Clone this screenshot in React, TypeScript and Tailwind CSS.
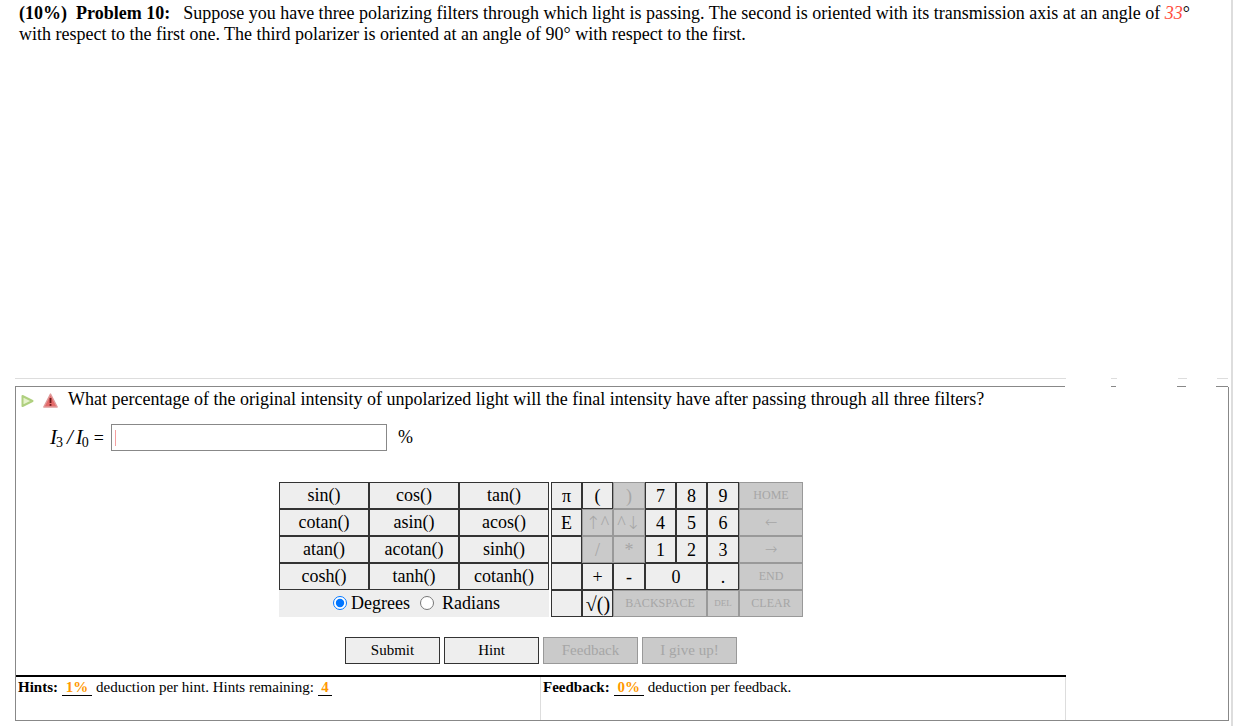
import React from 'react';

const functionKeys = [
  'sin()', 'cos()', 'tan()',
  'cotan()', 'asin()', 'acos()',
  'atan()', 'acotan()', 'sinh()',
  'cosh()', 'tanh()', 'cotanh()',
];

function Arrow({ c, tall }: { c: string; tall?: boolean }) {
  return <span className={`font-['DejaVu_Sans',sans-serif] font-extralight ${tall ? 'text-[18px]' : 'text-[15px]'}`}>{c}</span>;
}

type PadKey = { id: string; label?: React.ReactNode; span?: string; off?: boolean; small?: boolean; extra?: string };

const padKeys: PadKey[] = [
  { id: 'pi', label: 'π' }, { id: 'open', label: '(' }, { id: 'close', label: ')', off: true }, { id: '7', label: '7' }, { id: '8', label: '8' }, { id: '9', label: '9' }, { id: 'home', label: 'HOME', off: true, small: true },
  { id: 'e', label: 'E' }, { id: 'up', label: <><Arrow c="↑" tall />^</>, off: true }, { id: 'down', label: <>^<Arrow c="↓" tall /></>, off: true }, { id: '4', label: '4' }, { id: '5', label: '5' }, { id: '6', label: '6' }, { id: 'left', label: <Arrow c="←" />, off: true },
  { id: 'b1' }, { id: 'div', label: '/', off: true }, { id: 'mul', label: '*', off: true }, { id: '1', label: '1' }, { id: '2', label: '2' }, { id: '3', label: '3' }, { id: 'right', label: <Arrow c="→" />, off: true },
  { id: 'b2' }, { id: 'plus', label: '+' }, { id: 'minus', label: '-' }, { id: '0', label: '0', span: 'col-span-2' }, { id: 'dot', label: '.' }, { id: 'end', label: 'END', off: true, small: true },
  { id: 'b3' }, { id: 'sqrt', label: '√()', extra: 'pl-[1px] text-[20px]' }, { id: 'back', label: 'BACKSPACE', span: 'col-span-3', off: true, small: true }, { id: 'del', label: 'DEL', off: true, small: true, extra: 'text-[9px]' }, { id: 'clear', label: 'CLEAR', off: true, small: true },
];

function PadCell({ k }: { k: PadKey }) {
  const tone = k.off
    ? 'bg-[#cacaca] border-[#999] text-[#a6a6a6]'
    : 'bg-[#eee] border-[#333] text-black';
  const size = k.extra ? k.extra : k.small ? 'pb-[2px] text-[12px]' : 'text-[18px]';
  return (
    <div className={`flex items-center justify-center border overflow-hidden whitespace-nowrap leading-none ${tone} ${size} ${k.span ?? ''}`}>
      {k.label}
    </div>
  );
}

function ActionButton({ label, off }: { label: string; off?: boolean }) {
  return (
    <div
      className={`flex h-[27px] w-[95px] items-center justify-center border text-[15px] ${
        off ? 'bg-[#cacaca] border-[#999] text-[#a6a6a6]' : 'bg-[#eee] border-[#333] text-black'
      }`}
    >
      {label}
    </div>
  );
}

function Deduction({ value, width }: { value: string; width: string }) {
  return (
    <span className={`mx-[4px] inline-block ${width} border-b border-black text-center font-bold leading-[16px] text-[#ff9900]`}>
      {value}
    </span>
  );
}

export default function App() {
  return (
    <div className="h-[726px] w-[1236px] overflow-hidden bg-white font-['Liberation_Serif',serif] text-black">
      <div className="h-full w-[1233px] border-r-2 border-[#ddd] pl-[15px] pr-[3px]">
        {/* Problem statement */}
        <div className="h-[378px] pl-1 pt-[3px] text-[18px] leading-[21px]">
          <div className="whitespace-nowrap">
            <b className="mr-[13px]">(10%)&nbsp; Problem 10:</b>
            Suppose you have three polarizing filters through which light is passing. The second is oriented with its transmission axis at an angle of{' '}
            <i className="text-[#ff4d3d]">33</i>°
          </div>
          <div className="whitespace-nowrap">
            with respect to the first one. The third polarizer is oriented at an angle of 90° with respect to the first.
          </div>
        </div>

        {/* Broken rules above the question box */}
        <div className="flex h-[8px] items-start">
          <div className="h-px w-[1052px] bg-[#ddd]" />
          <div className="ml-[45px] h-px w-[6px] bg-[#ddd]" />
          <div className="ml-[61px] h-px w-[9px] bg-[#ddd]" />
          <div className="ml-[30px] h-px w-[11px] bg-[#ddd]" />
        </div>
        <div className="flex h-px items-start">
          <div className="h-px w-[1051px] bg-[#888]" />
          <div className="ml-[46px] h-px w-[5px] bg-[#888]" />
          <div className="ml-[61px] h-px w-[9px] bg-[#888]" />
          <div className="ml-[30px] h-px w-[12px] bg-[#888]" />
        </div>

        {/* Question box */}
        <div className="h-[334px] w-[1214px] border-x border-b border-[#888]">
          <div className="flex h-[26px] items-center pl-[5px]">
            <svg width="13" height="14" viewBox="0 0 13 14" className="mt-[2px]">
              <path d="M1.5 2 L11.5 7 L1.5 12 Z" fill="#e6f2cc" stroke="#afd07f" strokeWidth="2" strokeLinejoin="round" />
            </svg>
            <svg width="15" height="15" viewBox="0 0 15 15" className="ml-[9px] mt-[1px]">
              <path d="M7.5 1 L14.2 14 L0.8 14 Z" fill="#e46a6a" stroke="#e09a9a" strokeWidth="1.4" strokeLinejoin="round" />
              <path d="M7.5 5 V10" stroke="#6a1818" strokeWidth="1.8" />
              <path d="M7.5 11 V12.8" stroke="#6a1818" strokeWidth="1.8" />
            </svg>
            <span className="ml-[10px] mt-[-2px] whitespace-nowrap text-[18px]">
              What percentage of the original intensity of unpolarized light will the final intensity have after passing through all three filters?
            </span>
          </div>

          <div className="mt-[11px] flex h-[27px] items-center pl-[34px]">
            <span className="flex w-[61px] items-baseline whitespace-nowrap text-[21px] leading-none">
              <i>I</i>
              <span className="ml-[-1px] translate-y-[3px] text-[14px]">3</span>
              <i className="ml-[4px]">/</i>
              <i className="ml-[3px]">I</i>
              <span className="ml-[-1px] translate-y-[3px] text-[14px]">0</span>
              <span className="ml-[5px] text-[18px]">=</span>
            </span>
            <div className="flex h-[27px] w-[276px] items-center border border-[#888] pl-[3px]">
              <div className="h-[16px] w-px bg-[#f5a0a0]" />
            </div>
            <span className="ml-[11px] text-[18px]">%</span>
          </div>

          {/* Calculator */}
          <div className="ml-[263px] mt-[31px] flex">
            <div className="w-[270px]">
              <div className="grid grid-cols-3 grid-rows-[repeat(4,27px)]">
                {functionKeys.map(f => (
                  <div key={f} className="flex items-center justify-center border border-[#333] bg-[#eee] pb-[2px] text-[18px] leading-none">
                    {f}
                  </div>
                ))}
              </div>
              <div className="flex h-[27px] items-center justify-center bg-[#eee] pb-[2px] pl-[5px] text-[18px] leading-none">
                <input type="radio" name="angle" defaultChecked className="m-0 h-[14px] w-[14px]" />
                <span className="ml-[4px]">Degrees</span>
                <input type="radio" name="angle" className="ml-[10px] h-[14px] w-[14px]" />
                <span className="ml-[8px]">Radians</span>
              </div>
            </div>
            <div className="ml-[2px] grid w-[252px] grid-cols-[31px_31px_32px_31px_31px_32px_64px] grid-rows-[repeat(5,27px)]">
              {padKeys.map(k => (
                <PadCell key={k.id} k={k} />
              ))}
            </div>
          </div>

          <div className="ml-[329px] mt-[20px] flex gap-[4px]">
            <ActionButton label="Submit" />
            <ActionButton label="Hint" />
            <ActionButton label="Feedback" off />
            <ActionButton label="I give up!" off />
          </div>

          {/* Hints / feedback footer */}
          <div className="mt-[11px] flex h-[45px] w-[1050px] border-t-2 border-black text-[15px] leading-[19px]">
            <div className="w-[525px] whitespace-nowrap border-r border-[#ddd] pl-[2px] pt-[1px]">
              <b>Hints:</b><Deduction value="1%" width="w-[30px]" />deduction per hint. Hints remaining:<Deduction value="4" width="w-[14px]" />
            </div>
            <div className="flex-1 whitespace-nowrap border-r border-[#ddd] pl-[2px] pt-[1px]">
              <b>Feedback:</b><Deduction value="0%" width="w-[30px]" />deduction per feedback.
            </div>
          </div>
        </div>
      </div>
    </div>
  );
}
